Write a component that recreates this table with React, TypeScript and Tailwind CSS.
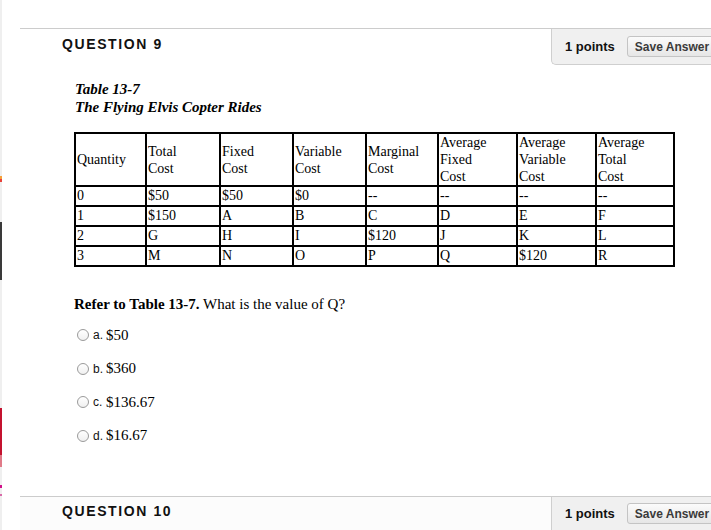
import React from "react";

const sans = { fontFamily: '"Liberation Sans", Arial, sans-serif' };

function PointsBox({ bottom }: { bottom?: boolean }) {
  return (
    <div
      className={
        "flex items-center w-[160px] bg-[#f0f0f0] border-l border-[#cfcfcf] pl-[13px] " +
        (bottom ? "h-[33px]" : "h-[36px] border-b rounded-bl-[5px]")
      }
    >
      <span className="text-[13px] font-bold text-[#111] leading-none whitespace-nowrap font-['Liberation_Sans',Arial,sans-serif]">
        1 points
      </span>
      <div className="ml-[12px] h-[21px] flex items-center pl-[7px] pr-[10px] border border-[#c4c4c4] rounded-[3px] bg-gradient-to-b from-[#fbfbfb] to-[#e6e6e6] whitespace-nowrap">
        <span className="text-[12px] font-bold text-[#3a3a3a] leading-none font-['Liberation_Sans',Arial,sans-serif]">
          Save Answer
        </span>
      </div>
    </div>
  );
}

function Radio({ label, value }: { label: string; value: string }) {
  return (
    <div className="flex items-center h-[18px]">
      <span className="w-[12px] h-[12px] rounded-full border border-[#9a9a9a] bg-gradient-to-b from-white to-[#f0f0f0] shrink-0" />
      <span className="ml-[4px] w-[13px] text-[12px] text-[#111] font-['Liberation_Sans',Arial,sans-serif]">
        {label}
      </span>
      <span className="text-[15px] text-black font-['Liberation_Serif','Times_New_Roman',serif]">
        {value}
      </span>
    </div>
  );
}

const headers: React.ReactNode[] = [
  <>Quantity</>,
  <>Total<br />Cost</>,
  <>Fixed<br />Cost</>,
  <>Variable<br />Cost</>,
  <>Marginal<br />Cost</>,
  <>Average<br />Fixed<br />Cost</>,
  <>Average<br />Variable<br />Cost</>,
  <>Average<br />Total<br />Cost</>,
];

const rows: string[][] = [
  ["0", "$50", "$50", "$0", "--", "--", "--", "--"],
  ["1", "$150", "A", "B", "C", "D", "E", "F"],
  ["2", "G", "H", "I", "$120", "J", "K", "L"],
  ["3", "M", "N", "O", "P", "Q", "$120", "R"],
];

const widths = [71, 74, 73, 73, 72, 79, 79, 78];

export default function App() {
  return (
    <div className="w-[711px] h-[530px] overflow-hidden bg-white flex" style={sans}>
      {/* left edge strip */}
      <div className="w-[2px] h-full bg-[#efefef] flex flex-col shrink-0">
        <div className="h-[176px]" />
        <div className="h-[3px] bg-[#f5a13a]" />
        <div className="h-[3px] bg-[#e8423a]" />
        <div className="h-[40px]" />
        <div className="h-[58px] bg-[#3a3a3a]" />
        <div className="h-[128px]" />
        <div className="h-[47px] bg-[#c4122f]" />
        <div className="h-[12px] bg-[#e07a88]" />
        <div className="h-[18px]" />
        <div className="h-[3px] bg-[#d0108a]" />
        <div className="h-[6px]" />
        <div className="h-[2px] bg-[#d86aa8]" />
      </div>

      <div className="flex-1 pt-[28px] flex flex-col">
        {/* Question 9 */}
        <div className="ml-[18px] border-t border-[#cccccc] flex justify-between">
          <div className="pl-[42px] pt-[8px] text-[14px] font-bold tracking-[1.6px] text-[#111] leading-none">
            QUESTION 9
          </div>
          <PointsBox />
        </div>

        <div className="ml-[72px] font-['Liberation_Serif','Times_New_Roman',serif] text-black">
          <div className="mt-[15px] pl-[1px] text-[15px] font-bold italic leading-[18px]">
            Table 13-7
            <br />
            The Flying Elvis Copter Rides
          </div>

          <table className="mt-[16px] border-separate border-spacing-0 border border-black table-fixed w-[601px] text-[14px]">
            <colgroup>
              {widths.map((w, i) => (
                <col key={i} style={{ width: w }} />
              ))}
            </colgroup>
            <thead>
              <tr>
                {headers.map((h, i) => (
                  <th
                    key={i}
                    className="border border-black font-normal text-left align-middle px-[1px] py-0 leading-[17px] h-[51px]"
                  >
                    {h}
                  </th>
                ))}
              </tr>
            </thead>
            <tbody>
              {rows.map((r, ri) => (
                <tr key={ri}>
                  {r.map((c, ci) => (
                    <td
                      key={ci}
                      className="border border-black px-[1px] py-[1px] leading-[16px] align-middle"
                    >
                      {c}
                    </td>
                  ))}
                </tr>
              ))}
            </tbody>
          </table>

          <div className="mt-[28px] text-[15px] leading-[18px]">
            <b>Refer to Table 13-7.</b> What is the value of Q?
          </div>

          <div className="mt-[13px] ml-[3px] flex flex-col gap-[15.5px]">
            <Radio label="a." value="$50" />
            <Radio label="b." value="$360" />
            <Radio label="c." value="$136.67" />
            <Radio label="d." value="$16.67" />
          </div>
        </div>

        {/* Question 10 */}
        <div className="mt-auto ml-[18px] border-t border-[#cccccc] flex justify-between bg-[#fcfcfc]">
          <div className="pl-[42px] pt-[7px] text-[14px] font-bold tracking-[1.6px] text-[#111] leading-none">
            QUESTION 10
          </div>
          <PointsBox bottom />
        </div>
      </div>
    </div>
  );
}
